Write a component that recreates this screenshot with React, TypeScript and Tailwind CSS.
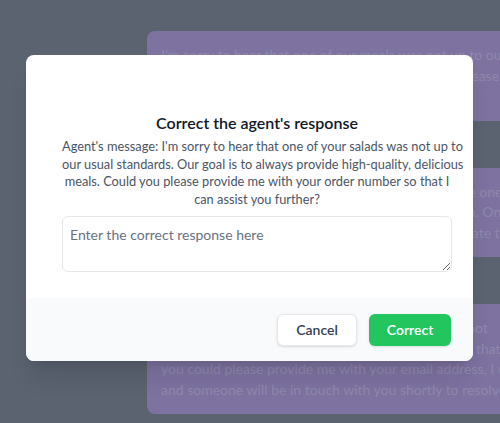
import React from 'react';

const font = { fontFamily: 'Lato, "Open Sans", sans-serif' };

// the lines of the chat bubbles behind the overlay
const bubbles = [
  [
    "I'm sorry to hear that one of our meals was not up to our usual standards.",
    'Our goal is to always provide high-quality meals. Please share your',
    'order number with me?',
  ],
  [
    "I'm afraid I couldn't find that order. Could you name one of the items",
    'the dishes you ordered or the date, so I can confirm. Once the',
    "details? Once I have them, I'll be very happy to update the order.",
  ],
  [
    "I'm sorry, but I can't seem to locate that order. It's not",
    'possible for me to check on the order right now, so that',
    'you could please provide me with your email address, I will pass it on',
    'and someone will be in touch with you shortly to resolve the issue.',
  ],
];

const message = [
  "Agent's message: I'm sorry to hear that one of your salads was not up to",
  'our usual standards. Our goal is to always provide high-quality, delicious',
  'meals. Could you please provide me with your order number so that I',
  'can assist you further?',
];

export default function App() {
  return (
    <div className="relative w-[500px] h-[423px] overflow-hidden bg-[#5b6270]" style={font}>
      {/* conversation behind the dialog */}
      <div className="flex flex-col gap-[47px] pt-[31px] pl-[147px]">
        {bubbles.map((lines, i) => (
          <div
            key={i}
            className="w-[440px] rounded-lg bg-[#7d72a0] px-[14px] py-[14px] text-[14px] leading-[20.5px] text-[#8f88ab] whitespace-nowrap overflow-hidden"
          >
            {lines.map((l, j) => (
              <div key={j}>{l}</div>
            ))}
          </div>
        ))}
      </div>

      {/* dialog */}
      <div className="absolute left-[26px] top-[55px] w-[447px] rounded-lg bg-white shadow-xl overflow-hidden">
        <div className="pt-[56px] pb-[26px] pl-9 pr-[21px] text-center">
          <h3 className="text-[16px] leading-6 font-semibold text-gray-900">Correct the agent's response</h3>
          <p className="mt-[3px] text-[12.8px] leading-[17.7px] text-gray-600">
            {message.map((l, i) => (
              <span key={i} className="block whitespace-nowrap">
                {l}
              </span>
            ))}
          </p>
          <textarea
            className="mt-[7px] block w-full h-[56px] rounded-md border border-gray-200 px-[7px] py-[8px] text-[14px] leading-5 text-gray-700 placeholder:text-gray-500 outline-none"
            placeholder="Enter the correct response here"
            style={font}
          />
        </div>
        <div className="flex justify-end gap-3 bg-gray-50 pt-4 pb-[15px] pr-[22px]">
          <button className="h-[32px] w-[80px] rounded-md border border-gray-200 bg-white text-[14px] font-semibold text-gray-700 shadow-sm">
            Cancel
          </button>
          <button className="h-[32px] w-[82px] rounded-md bg-[#22c55e] text-[14px] font-semibold text-white shadow-sm">
            Correct
          </button>
        </div>
      </div>
    </div>
  );
}
